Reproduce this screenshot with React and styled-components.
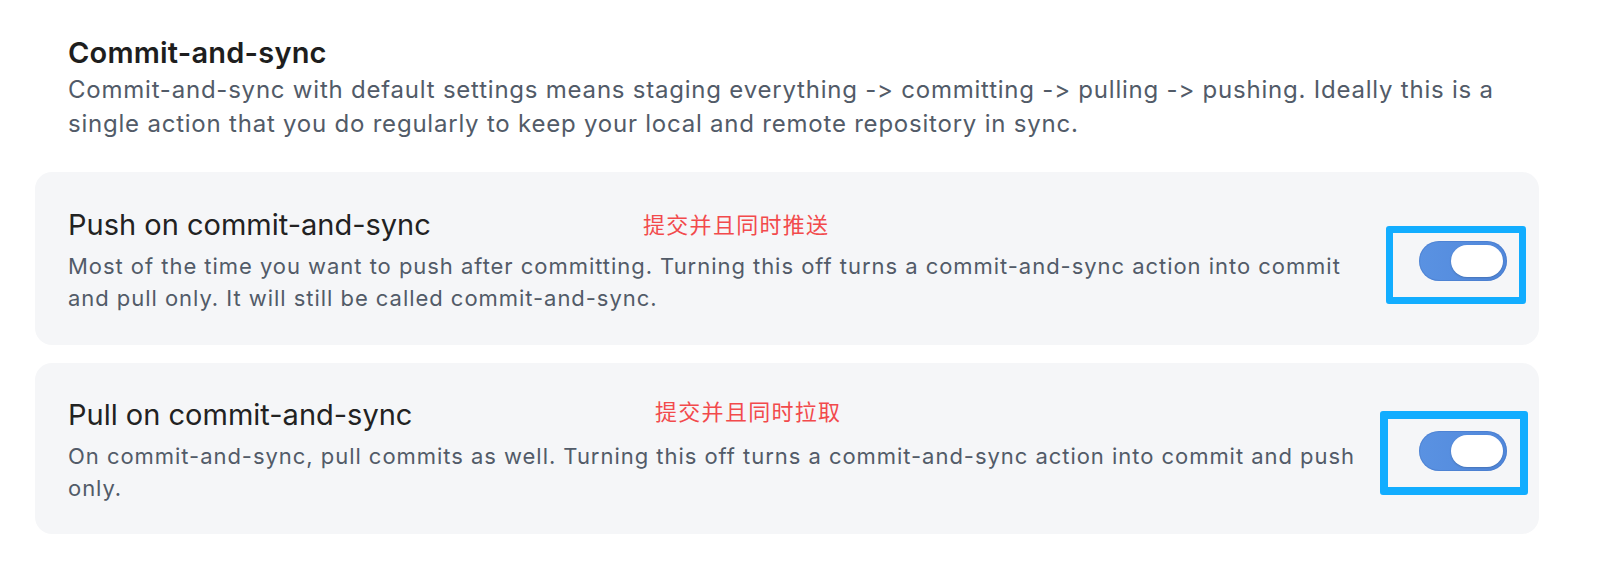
import styled, { createGlobalStyle } from "styled-components";
import { useState } from "react";

const GlobalStyle = createGlobalStyle`
  body {
    margin: 0;
    background: #ffffff;
    font-family: Inter, "Noto Sans", "Noto Sans CJK SC", sans-serif;
    font-feature-settings: "calt" 0;
    -webkit-font-smoothing: antialiased;
  }
`;

const settings = [
  {
    key: "push",
    name: "Push on commit-and-sync",
    desc: [
      "Most of the time you want to push after committing. Turning this off turns a commit-and-sync action into commit",
      "and pull only. It will still be called commit-and-sync.",
    ],
    note: "提交并且同时推送",
    noteLeft: 608,
    noteTop: 40,
    pad: [36, 31],
    box: { l: 33, r: 19, t: 15, b: 23, w: 7 },
  },
  {
    key: "pull",
    name: "Pull on commit-and-sync",
    desc: [
      "On commit-and-sync, pull commits as well. Turning this off turns a commit-and-sync action into commit and push",
      "only.",
    ],
    note: "提交并且同时拉取",
    noteLeft: 620,
    noteTop: 36,
    pad: [35, 30],
    box: { l: 39, r: 21, t: 20, b: 24, w: 8 },
  },
];

export default function App() {
  const [values, setValues] = useState({ push: true, pull: true });

  const toggle = (key) => (e) => {
    e.preventDefault();
    setValues((v) => ({ ...v, [key]: !v[key] }));
  };

  return (
    <STPage>
      <GlobalStyle />
      <STHeading>
        <STHeadingTitle>Commit-and-sync</STHeadingTitle>
        <STHeadingDesc>
          Commit-and-sync with default settings means staging everything -&gt;
          committing -&gt; pulling -&gt; pushing. Ideally this is a
          <br />
          single action that you do regularly to keep your local and remote
          repository in sync.
        </STHeadingDesc>
      </STHeading>
      <STList>
        {settings.map((item) => (
          <STCard key={item.key} $top={item.pad[0]} $bottom={item.pad[1]}>
            <STInfo>
              <STName>{item.name}</STName>
              <STDesc>
                {item.desc.map((line, i) => (
                  <STLine key={i}>{line}</STLine>
                ))}
              </STDesc>
            </STInfo>
            <STToggleWrap>
              <STToggle
                onClick={toggle(item.key)}
                className={values[item.key] ? "on" : ""}
              >
                <STKnob />
              </STToggle>
              <STMarkBox
                $l={item.box.l}
                $r={item.box.r}
                $t={item.box.t}
                $b={item.box.b}
                $w={item.box.w}
              />
            </STToggleWrap>
            <STNote $left={item.noteLeft} $top={item.noteTop}>
              {item.note}
            </STNote>
          </STCard>
        ))}
      </STList>
    </STPage>
  );
}

const STPage = styled.div`
  width: 1504px;
  padding: 36px 0 0 35px;
`;

const STHeading = styled.div`
  padding-left: 33px;
`;

const STHeadingTitle = styled.div`
  font-size: 29px;
  line-height: 34px;
  font-weight: 600;
  letter-spacing: 0.2px;
  color: #1e1e1e;
`;

const STHeadingDesc = styled.div`
  margin-top: 3px;
  font-size: 24px;
  line-height: 34px;
  letter-spacing: 0.78px;
  color: #525b68;
  white-space: nowrap;
`;

const STList = styled.div`
  display: flex;
  flex-direction: column;
  gap: 18px;
  margin-top: 31px;
`;

const STCard = styled.div`
  position: relative;
  display: flex;
  align-items: center;
  gap: 30px;
  padding: ${(p) => p.$top}px 32px ${(p) => p.$bottom}px 33px;
  background-color: #f5f6f8;
  border-radius: 17px;
`;

const STInfo = styled.div`
  flex: 1;
  min-width: 0;
`;

const STName = styled.div`
  font-size: 29px;
  line-height: 34px;
  color: #222222;
`;

const STDesc = styled.div`
  margin-top: 8px;
  font-size: 22px;
  line-height: 32px;
  letter-spacing: 0.96px;
  color: #525b68;
`;

const STLine = styled.div`
  white-space: nowrap;
`;

const STToggleWrap = styled.div`
  position: relative;
  flex-shrink: 0;
`;

const STToggle = styled.div`
  display: flex;
  align-items: center;
  box-sizing: border-box;
  width: 88px;
  height: 40px;
  padding: 0 4px;
  border-radius: 20px;
  background-color: #d5d8dd;
  cursor: pointer;
  &.on {
    justify-content: flex-end;
    background: linear-gradient(90deg, #5a92e2, #5188db);
    box-shadow: inset 0 0 0 1px rgba(60, 110, 190, 0.35);
  }
`;

const STKnob = styled.span`
  width: 52px;
  height: 32px;
  border-radius: 16px;
  background-color: #ffffff;
  box-shadow: 0 1px 2px rgba(0, 0, 0, 0.18);
`;

const STMarkBox = styled.span`
  position: absolute;
  left: -${(p) => p.$l}px;
  right: -${(p) => p.$r}px;
  top: -${(p) => p.$t}px;
  bottom: -${(p) => p.$b}px;
  border: ${(p) => p.$w}px solid #12adff;
  border-radius: 3px;
  pointer-events: none;
`;

const STNote = styled.span`
  position: absolute;
  left: ${(p) => p.$left}px;
  top: ${(p) => p.$top}px;
  font-family: "Noto Sans CJK SC", sans-serif;
  font-size: 22px;
  line-height: 22px;
  letter-spacing: 1.3px;
  color: #f24a4c;
`;
